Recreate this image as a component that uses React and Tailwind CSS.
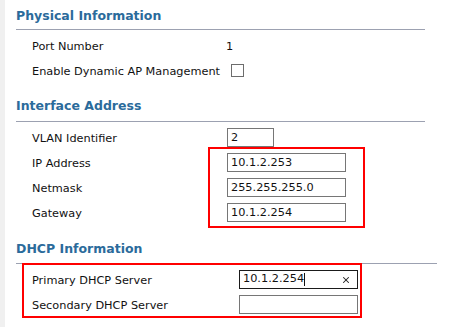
import { X } from "lucide-react";

function Row({ label, labelWidth, children }) {
  return (
    <div className="flex h-[25px] items-center">
      <div className={`${labelWidth} pt-[4px]`}>{label}</div>
      {children}
    </div>
  );
}

function Field({ value, width }) {
  return (
    <input
      type="text"
      readOnly
      value={value}
      className={`h-[19px] ${width} border border-[#767676] bg-white px-[3px] font-['DejaVu_Sans',Verdana,sans-serif] text-[11.3px] text-[#111] outline-none`}
    />
  );
}

export default function App() {
  return (
    <div className="relative flex min-h-[327px] w-[458px] bg-white font-['DejaVu_Sans',Verdana,sans-serif] text-[11.3px] text-[#111]">
      <div className="w-[5px] shrink-0 bg-[#f0f0f0]" />

      <div className="flex-1 pl-[11px]">
        {/* Physical Information */}
        <div className="flex h-[30px] w-[409px] items-center border-b border-[#9ca1b1] pt-[4px] text-[12.5px] font-bold text-[#2b6b9b]">
          Physical Information
        </div>
        <div className="pl-[16px] pt-[3px]">
          <Row label="Port Number" labelWidth="w-[194px]">
            <span className="pt-[4px]">1</span>
          </Row>
          <Row label="Enable Dynamic AP Management" labelWidth="w-[194px]">
            <span className="ml-[5px] h-[13px] w-[13px] border border-[#6d6d6d] bg-white" />
          </Row>
        </div>

        {/* Interface Address */}
        <div className="flex h-[39px] w-[409px] items-end border-b border-[#9ca1b1] pb-[5px] text-[12.5px] font-bold text-[#2b6b9b]">
          Interface Address
        </div>
        <div className="pl-[16px] pt-[3px]">
          <Row label="VLAN Identifier" labelWidth="w-[195px]">
            <Field value="2" width="w-[47px]" />
          </Row>
          <Row label="IP Address" labelWidth="w-[195px]">
            <Field value="10.1.2.253" width="w-[119px]" />
          </Row>
          <Row label="Netmask" labelWidth="w-[195px]">
            <Field value="255.255.255.0" width="w-[119px]" />
          </Row>
          <Row label="Gateway" labelWidth="w-[195px]">
            <Field value="10.1.2.254" width="w-[119px]" />
          </Row>
        </div>

        {/* DHCP Information */}
        <div className="flex h-[39px] w-[421px] items-end border-b border-[#9ca1b1] pb-[4px] text-[12.5px] font-bold text-[#2b6b9b]">
          DHCP Information
        </div>
        <div className="pl-[16px] pt-[3px]">
          <Row label="Primary DHCP Server" labelWidth="w-[207px]">
            <div className="flex h-[19px] w-[119px] items-center border border-[#1a1a1a] bg-white pl-[3px] pr-[6px]">
              <span>10.1.2.254</span>
              <span className="h-[13px] w-px bg-[#111]" />
              <X className="ml-auto h-[10px] w-[10px] text-[#222]" strokeWidth={2.5} />
            </div>
          </Row>
          <Row label="Secondary DHCP Server" labelWidth="w-[207px]">
            <Field value="" width="w-[119px]" />
          </Row>
        </div>
      </div>

      {/* annotation boxes */}
      <div className="pointer-events-none absolute left-[208px] top-[147px] h-[81px] w-[157px] border-2 border-[#f00]" />
      <div className="pointer-events-none absolute left-[22px] top-[263px] h-[55px] w-[340px] border-2 border-[#f00]" />
    </div>
  );
}
